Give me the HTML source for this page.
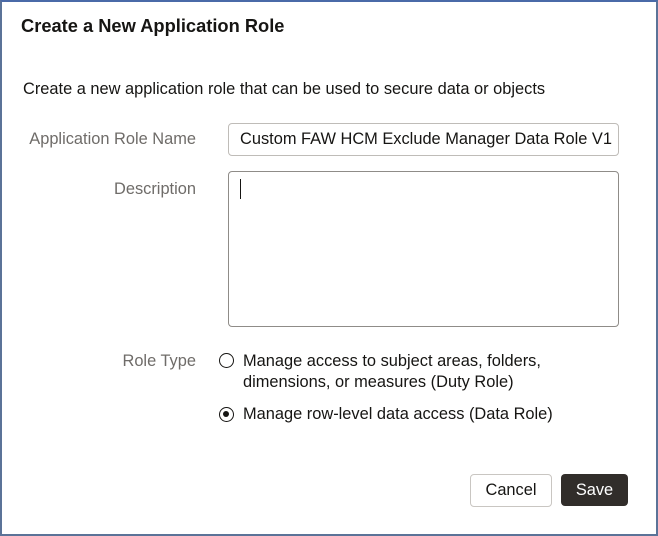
<!DOCTYPE html>
<html><head><style>
html,body{margin:0;padding:0;background:#fff;}
body{width:658px;height:536px;position:relative;overflow:hidden;font-family:"Liberation Sans",sans-serif;color:#161513;}
.frame{position:absolute;left:0;top:0;width:654px;height:532px;border:2px solid #5b7398;border-top-color:#4a6aa8;}
.a{position:absolute;white-space:nowrap;}
.f{font-size:16.4px;}
.lbl{color:#6f6c69;font-size:16.4px;text-align:right;width:196px;left:0;}
.box{position:absolute;border:1px solid #bfbcb8;border-radius:4px;background:#fff;box-sizing:border-box;}
.radio{position:absolute;width:15px;height:15px;border:1.5px solid #161513;border-radius:50%;box-sizing:border-box;}
</style></head><body>
<div class="frame"></div>
<div class="a" style="left:21px;top:15px;font-size:18.3px;font-weight:bold;">Create a New Application Role</div>
<div class="a f" style="left:23px;top:80px;">Create a new application role that can be used to secure data or objects</div>
<div class="a lbl" style="top:130px;">Application Role Name</div>
<div class="box" style="left:228px;top:123px;width:391px;height:33px;"></div>
<div class="a f" style="left:240px;top:130px;">Custom FAW HCM Exclude Manager Data Role V1</div>
<div class="a lbl" style="top:180px;">Description</div>
<div class="box" style="left:228px;top:171px;width:391px;height:156px;border-color:#8f8c88;"></div>
<div style="position:absolute;left:240px;top:179px;width:1px;height:20px;background:#161513;"></div>
<div class="a lbl" style="top:352px;">Role Type</div>
<div class="radio" style="left:219px;top:353px;"></div>
<div class="a f" style="left:243px;top:351px;line-height:21px;">Manage access to subject areas, folders,<br>dimensions, or measures (Duty Role)</div>
<div class="radio" style="left:219px;top:407px;"><div style="position:absolute;left:3px;top:3px;width:6px;height:6px;border-radius:50%;background:#161513;"></div></div>
<div class="a f" style="left:243px;top:405px;">Manage row-level data access (Data Role)</div>
<div class="box" style="left:470px;top:474px;width:82px;height:33px;border-color:#c9c6c2;"></div>
<div class="a f" style="left:470px;top:481px;width:82px;text-align:center;">Cancel</div>
<div style="position:absolute;left:561px;top:474px;width:67px;height:32px;background:#312d2a;border-radius:4px;"></div>
<div class="a f" style="left:561px;top:481px;width:67px;text-align:center;color:#fff;">Save</div>
</body></html>
